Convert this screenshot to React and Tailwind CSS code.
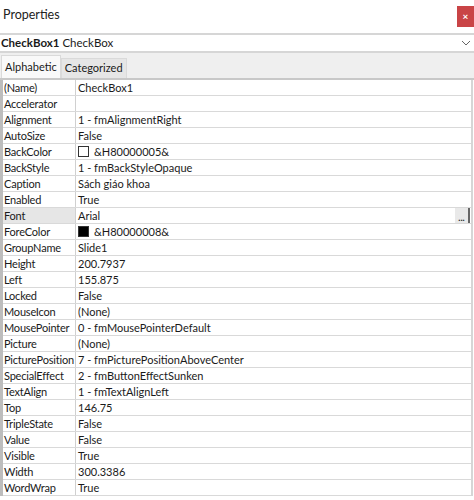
import React from 'react';

const rows = [
  ['(Name)', 'CheckBox1'],
  ['Accelerator', ''],
  ['Alignment', '1 - fmAlignmentRight'],
  ['AutoSize', 'False'],
  ['BackColor', '&H80000005&', 'white'],
  ['BackStyle', '1 - fmBackStyleOpaque'],
  ['Caption', 'Sách giáo khoa'],
  ['Enabled', 'True'],
  ['Font', 'Arial'],
  ['ForeColor', '&H80000008&', 'black'],
  ['GroupName', 'Slide1'],
  ['Height', '200.7937'],
  ['Left', '155.875'],
  ['Locked', 'False'],
  ['MouseIcon', '(None)'],
  ['MousePointer', '0 - fmMousePointerDefault'],
  ['Picture', '(None)'],
  ['PicturePosition', '7 - fmPicturePositionAboveCenter'],
  ['SpecialEffect', '2 - fmButtonEffectSunken'],
  ['TextAlign', '1 - fmTextAlignLeft'],
  ['Top', '146.75'],
  ['TripleState', 'False'],
  ['Value', 'False'],
  ['Visible', 'True'],
  ['Width', '300.3386'],
  ['WordWrap', 'True'],
];

const Row = ({ name, value, swatch }) => {
  const selected = name === 'Font';
  return (
    <div className="flex h-4 border-b border-[#d9d9d9]">
      <div
        className={`w-[73px] shrink-0 overflow-hidden whitespace-nowrap border-r border-[#d0d0d0] pl-[1px] leading-[15px] tracking-[-0.2px] ${
          selected ? 'bg-[#e6e6e6]' : 'bg-white'
        }`}
      >
        {name}
      </div>
      <div className="relative flex flex-1 items-center gap-[5px] whitespace-nowrap pl-[2px] leading-[15px]">
        {swatch && (
          <span
            className={`inline-block h-[11px] w-[11px] border border-[#333] ${
              swatch === 'black' ? 'bg-black' : 'bg-white'
            }`}
          />
        )}
        <span>{value}</span>
        {selected && (
          <span className="absolute right-[1px] top-0 flex h-[15px] w-[15px] items-end justify-center border-r-2 border-[#666] bg-[#e9e9e9] pb-[2px] text-[9px] font-bold leading-[6px]">
            ...
          </span>
        )}
      </div>
    </div>
  );
};

export default function App() {
  return (
    <div
      className="h-[500px] w-[474px] overflow-hidden bg-white text-[11px] text-[#1a1a1a]"
      style={{ fontFamily: 'Lato, "Noto Sans", Arial, sans-serif' }}
    >
      {/* title bar */}
      <div className="flex h-[33px] items-start justify-between">
        <div className="pl-[3px] pt-[6px] text-[12.5px] text-[#222]">Properties</div>
        <div className="mt-[6px] flex h-[21px] w-[17px] items-center justify-center bg-[#c94446] text-[10px] font-bold text-white">
          ×
        </div>
      </div>

      {/* object combo */}
      <div className="flex h-[20px] items-center justify-between border-y-2 border-[#d6d6d6] bg-white">
        <div className="whitespace-nowrap pl-[1px] text-[11.5px]">
          <span className="font-bold">CheckBox1</span> CheckBox
        </div>
        <svg width="10" height="6" viewBox="0 0 10 6" className="mr-[3px]">
          <path d="M1 1 L5 5 L9 1" fill="none" stroke="#666" strokeWidth="1" />
        </svg>
      </div>

      {/* tabs */}
      <div className="flex h-[25px] items-end bg-[#efefef] pl-[1px]">
        <div className="flex h-[23px] items-center border border-b-0 border-[#dadada] bg-[#f9f9f9] px-[3px] text-[11px]">
          Alphabetic
        </div>
        <div className="flex h-[20px] items-center border border-b-0 border-[#dadada] bg-[#e6e6e6] px-[3px] text-[11px]">
          Categorized
        </div>
      </div>

      {/* grid */}
      <div className="flex border-t-2 border-[#c8c8c8]">
        <div className="w-[3px] shrink-0 bg-[#bdbdbd]" />
        <div className="flex-1 border-r-2 border-[#d6d6d6]">
          {rows.map(([n, v, s]) => (
            <Row key={n} name={n} value={v} swatch={s} />
          ))}
        </div>
        <div className="w-[1px] shrink-0" />
      </div>
    </div>
  );
}
